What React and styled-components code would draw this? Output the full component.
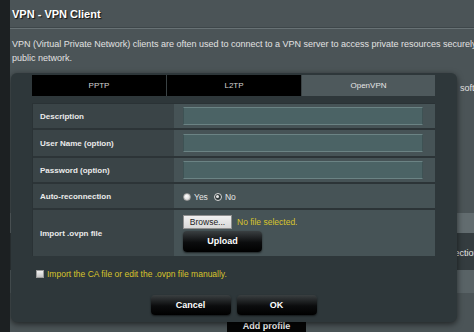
import React from 'react';
import styled, { createGlobalStyle } from 'styled-components';

const GlobalStyle = createGlobalStyle`
  html, body { margin: 0; padding: 0; }
  body {
    background: #4b5457;
    font-family: "Liberation Sans", Arial, sans-serif;
  }
`;

const fields = [
    { label: 'Description', h: 26 },
    { label: 'User Name (option)', h: 28 },
    { label: 'Password (option)', h: 26 },
];

export default function App() {
    return (
        <>
            <GlobalStyle />
            <Page>
                <Strip />
                <Content>
                    <Title>VPN - VPN Client</Title>
                    <Divider />
                    <Intro>
                        <IntroLine>VPN (Virtual Private Network) clients are often used to connect to a VPN server to access private resources securely over a</IntroLine>
                        <IntroLine>public network.</IntroLine>
                    </Intro>
                    <SideNote>software</SideNote>
                    <Band $tone="#626c6f" $top={119} $h={20} />
                    <Band $tone="#343c3f" $h={37}><BandText>Connection</BandText></Band>
                    <Band $tone="#596366" $h={23} />
                    <ProfileRow>
                        <ProfileButton>Add profile</ProfileButton>
                    </ProfileRow>

                    <Modal>
                        <Tabs>
                            <Tab>PPTP</Tab>
                            <Tab>L2TP</Tab>
                            <Tab $active>OpenVPN</Tab>
                        </Tabs>
                        <Table>
                            {fields.map(f => (
                                <Row key={f.label} $h={f.h}>
                                    <Label>{f.label}</Label>
                                    <Cell><TextInput type="text" /></Cell>
                                </Row>
                            ))}
                            <Row $h={26}>
                                <Label>Auto-reconnection</Label>
                                <Cell>
                                    <Radios>
                                        <Radio><Dot /> Yes</Radio>
                                        <Radio><Dot $checked /> No</Radio>
                                    </Radios>
                                </Cell>
                            </Row>
                            <Row $h={46} $last>
                                <Label>Import .ovpn file</Label>
                                <Cell>
                                    <FileLine>
                                        <Browse>Browse...</Browse>
                                        <Notice>No file selected.</Notice>
                                    </FileLine>
                                    <DarkButton $w={79} $h={21}>Upload</DarkButton>
                                </Cell>
                            </Row>
                        </Table>
                        <CheckLine>
                            <CheckBox />
                            <Notice>Import the CA file or edit the .ovpn file manually.</Notice>
                        </CheckLine>
                        <Actions>
                            <DarkButton $w={80} $h={20}>Cancel</DarkButton>
                            <DarkButton $w={80} $h={20}>OK</DarkButton>
                        </Actions>
                    </Modal>
                </Content>
            </Page>
        </>
    );
}

const Page = styled.div`
    display: flex;
    width: 474px;
    height: 332px;
    overflow: hidden;
`;

const Strip = styled.div`
    width: 10px;
    flex-shrink: 0;
    background: #1c2022;
`;

const Content = styled.div`
    position: relative;
    flex: 1;
    min-width: 0;
    background: #4b5457;
    overflow: hidden;
`;

const Title = styled.div`
    padding: 8px 0 0 2px;
    height: 13px;
    font-size: 11px;
    line-height: 13px;
    font-weight: 700;
    color: #fff;
    text-shadow: 1px 1px 1px #111;
`;

const Divider = styled.div`
    margin-top: 6px;
    height: 0;
    border-top: 1px solid #3e474a;
    border-bottom: 1px solid #687275;
`;

const Intro = styled.div`
    margin-top: 8px;
    padding-left: 2px;
    font-size: 9px;
    line-height: 14px;
    color: #e2e2e2;
`;

const IntroLine = styled.div`
    white-space: nowrap;
`;

const SideNote = styled.div`
    margin-top: 17px;
    padding-left: 450px;
    font-size: 9px;
    line-height: 12px;
    color: #e2e2e2;
    white-space: nowrap;
`;

const Band = styled.div`
    margin-top: ${p => p.$top || 0}px;
    height: ${p => p.$h}px;
    background: ${p => p.$tone};
    display: flex;
    align-items: flex-end;
`;

const BandText = styled.span`
    padding: 0 0 12px 423px;
    font-size: 9px;
    color: #e6e6e6;
    white-space: nowrap;
`;

const ProfileRow = styled.div`
    padding: 22px 0 0 217px;
`;

const ProfileButton = styled.div`
    width: 79px;
    height: 22px;
    border-radius: 3px;
    background: #050505;
    color: #fff;
    font-size: 9px;
    font-weight: 700;
    line-height: 22px;
    text-align: center;
`;

const Modal = styled.div`
    position: absolute;
    left: 1px;
    top: 73px;
    width: 446px;
    height: 249px;
    box-sizing: border-box;
    padding: 2px 22px 0 21px;
    background: #2e373a;
    border-radius: 6px;
    box-shadow: 0 2px 6px rgba(0, 0, 0, 0.6);
`;

const Tabs = styled.div`
    display: grid;
    grid-template-columns: 134px 134px 1fr;
    gap: 1px;
    height: 21px;
    background: #3a4244;
`;

const Tab = styled.div`
    background: ${p => (p.$active ? '#4e595c' : '#000')};
    color: ${p => (p.$active ? '#e6e6e6' : '#d4d4d4')};
    font-size: 8px;
    line-height: 21px;
    text-align: center;
`;

const Table = styled.div`
    margin-top: 7px;
    border-top: 1px solid #2a3235;
    border-left: 1px solid #2a3235;
`;

const Row = styled.div`
    display: grid;
    grid-template-columns: 141px 1fr;
    height: ${p => p.$h}px;
    box-sizing: border-box;
    border-bottom: ${p => (p.$last ? 'none' : '2px solid #2c3437')};
`;

const Label = styled.div`
    display: flex;
    align-items: center;
    padding-left: 7px;
    background: #3a4447;
    color: #ebebeb;
    font-size: 8px;
    font-weight: 700;
`;

const Cell = styled.div`
    display: flex;
    flex-direction: column;
    justify-content: center;
    gap: 2px;
    padding: 0 12px 0 9px;
    background: #465356;
`;

const TextInput = styled.input`
    box-sizing: border-box;
    width: 240px;
    height: 18px;
    margin: 0;
    padding: 0 4px;
    background: #4b6365;
    border: 1px solid #3e5254;
    border-top-color: #6b8384;
    border-bottom-color: #6b8384;
    outline: none;
    color: #fff;
    font-size: 9px;
`;

const Radios = styled.div`
    display: flex;
    gap: 6px;
    padding-top: 1px;
`;

const Radio = styled.span`
    display: flex;
    align-items: center;
    gap: 3px;
    font-size: 8.5px;
    color: #e4e4e4;
`;

const Dot = styled.span`
    position: relative;
    width: 8px;
    height: 8px;
    box-sizing: border-box;
    border-radius: 50%;
    border: 1px solid ${p => (p.$checked ? '#d8d8d8' : '#9a9a9a')};
    background: ${p => (p.$checked ? '#2f383a' : 'radial-gradient(circle at 40% 35%, #fff, #c9c9c9)')};

    &::after {
        content: '';
        display: ${p => (p.$checked ? 'block' : 'none')};
        position: absolute;
        left: 1.5px;
        top: 1.5px;
        width: 3px;
        height: 3px;
        border-radius: 50%;
        background: #e8e8e8;
    }
`;

const FileLine = styled.div`
    display: flex;
    align-items: center;
    gap: 5px;
`;

const Browse = styled.div`
    width: 49px;
    height: 14px;
    box-sizing: border-box;
    border: 1px solid #8f8f8f;
    background: linear-gradient(#f0f0f0, #d8d8d8);
    color: #222;
    font-size: 8.5px;
    line-height: 12px;
    text-align: center;
`;

const Notice = styled.span`
    font-size: 8.5px;
    color: #d8c42c;
    white-space: nowrap;
`;

const DarkButton = styled.div`
    width: ${p => p.$w}px;
    height: ${p => p.$h}px;
    border-radius: 4px;
    background: linear-gradient(#3a3f41, #0b0c0d 55%, #000);
    box-shadow: 0 1px 2px rgba(0, 0, 0, 0.6);
    color: #fff;
    font-size: 9px;
    font-weight: 700;
    line-height: ${p => p.$h}px;
    text-align: center;
`;

const CheckLine = styled.div`
    display: flex;
    align-items: center;
    gap: 3px;
    margin-top: 12px;
    padding-left: 4px;
    height: 12px;
`;

const CheckBox = styled.span`
    width: 8px;
    height: 8px;
    box-sizing: border-box;
    border: 1px solid #9c9c9c;
    background: linear-gradient(#f2f2f2, #c4c4c4);
`;

const Actions = styled.div`
    display: flex;
    justify-content: center;
    gap: 6px;
    margin-top: 15px;
`;
